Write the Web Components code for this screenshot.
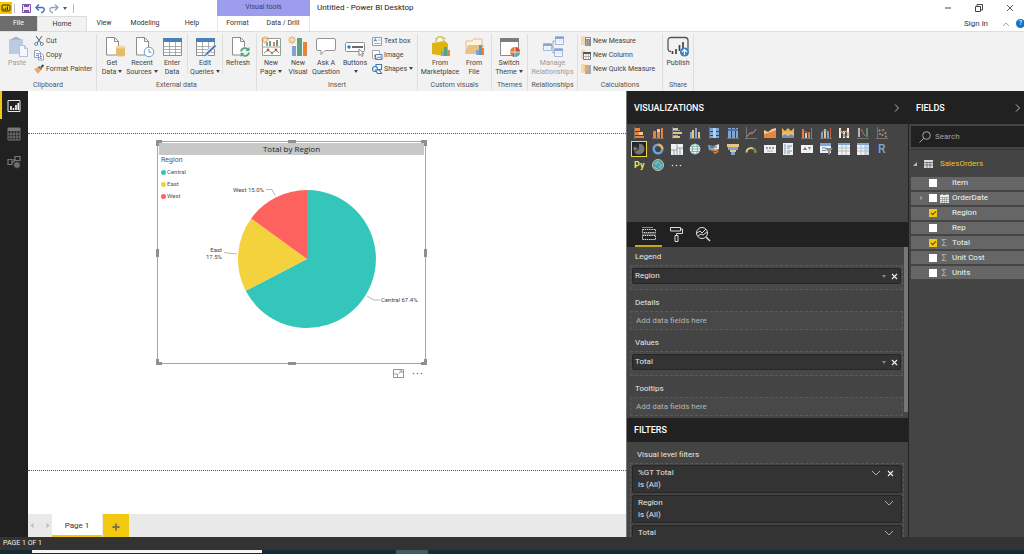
<!DOCTYPE html>
<html lang="en">
<head>
<meta charset="utf-8">
<title>Untitled - Power BI Desktop</title>
<style>
html, body { margin: 0; height: 100%; overflow: hidden; }
body { font: 7px/9px Roboto, "Noto Sans", sans-serif; color: #333; background: #fff; }
</style>
</head>
<body>
<report-app></report-app>
<script>
const RESET = `<style>
*{box-sizing:border-box}
button{font:inherit;color:inherit;background:none;border:0;margin:0;padding:0;text-align:inherit;cursor:default}
a{color:inherit;text-decoration:none}
svg{display:block;overflow:visible}
</style>`;

function define(name, html, ready) {
  const template = document.createElement('template');
  customElements.define(name, class extends HTMLElement {
    constructor() {
      super();
      this.attachShadow({ mode: 'open' });
    }
    connectedCallback() {
      if (this.shadowRoot.childNodes.length) return;
      template.innerHTML = RESET + (typeof html === 'function' ? html(this) : html);
      this.shadowRoot.append(template.content.cloneNode(true));
      if (ready) ready(this);
    }
  });
}

/* ---------- icons ---------- */
const doc = '<path d="M4.500 1.500h8l4 4v13.500h-12z" fill="#fff" stroke="#8c8c8c"/><path d="M12.500 1.500v4h4" fill="none" stroke="#8c8c8c"/>';
const grid = '<path d="M1.500 2.500h18v17h-18z" fill="#fff" stroke="#8c8c8c"/><path d="M1 2h19v4H1z" fill="#4a7fb8"/><path d="M1 10.500h19M1 13.500h19M1 16.500h19M7.500 6v13M13.500 6v13" stroke="#9b9b9b" stroke-width=".8"/>';
const sun = '<g stroke="#e3a64d" stroke-width="1.100"><path d="M4 0v8M0 4h8M1.200 1.200l5.600 5.600M6.800 1.200l-5.600 5.600"/></g><circle cx="4" cy="4" r="1.800" fill="#fbe6bd"/>';
const sheet = '<rect x="0" y="0" width="4" height="9" fill="#f2d8b2"/>';
const calc = '<rect x="4" y="1" width="6" height="9" fill="#8b8b8b"/><path d="M5 2.500h4" stroke="#fff"/><path d="M5.500 4.500v5M7.500 4.500v5" stroke="#ccc" stroke-dasharray="1 1"/>';
const O = '#e8833a', B = '#7ba6d6', Y = '#e9c583', W = '#f1f1f1';
const r = (x, y, w, h, f) => `<rect x="${x}" y="${y}" width="${w}" height="${h}" fill="${f}"/>`;
const axis = '<path d="M1.500 0v12" stroke="#8a8a8a" stroke-width=".7"/>';
const base = '<path d="M0 11.500h12" stroke="#8a8a8a" stroke-width=".7"/>';

const ICONS = {
  getdata: [20, 20, doc + '<path d="M14 11v8c0 2 9 2 9 0v-8z" fill="#e7bb6d"/><ellipse cx="18.500" cy="11" rx="4.500" ry="1.600" fill="#f5d79d"/>'],
  recent: [20, 20, doc + '<circle cx="17" cy="16" r="4.800" fill="#fff" stroke="#6f9cca"/><path d="M17 13v3.300h2.500" fill="none" stroke="#6f9cca"/>'],
  enter: [20, 20, grid],
  edit: [20, 20, grid + '<path d="M10 19.500L20 9.500" stroke="#f2f2f2" stroke-width="4"/><path d="M11 18.500L20.500 9.500" stroke="#4180c0" stroke-width="2"/><path d="M9 20.500l1-2.500 1.500 1.500z" fill="#4180c0"/>'],
  refresh: [20, 20, doc + '<circle cx="17" cy="16" r="5.500" fill="#f2f2f2"/><g fill="none" stroke="#5ba282" stroke-width="1.700"><path d="M13 15.500c.8-4 5.500-4.500 7.500-1.500M21 16.500c-.8 4-5.500 4.500-7.500 1.500"/></g><path d="M21.500 11v4h-4zM12.500 21v-4h4z" fill="#5ba282"/>'],
  newpage: [20, 20, '<path d="M1.500 2.500h18v17h-18z" fill="#fff" stroke="#9a9a9a"/><path d="M1 11h19" stroke="#9a9a9a"/>' + r(5, 6, 2, 4, B) + r(8, 5, 2, 5, '#5ba282') + r(12, 6, 2, 4, O) + r(15, 4, 2, 6, '#5ba282') + '<path d="M3 17l4-3 4 3 4-3 3 3" fill="none" stroke="#5ba282"/><circle cx="7" cy="14" r="1.400" fill="#d1532e"/><circle cx="15" cy="14" r="1.400" fill="#d1532e"/><circle cx="11" cy="17" r="1.200" fill="#5ba282"/>' + sun],
  newvisual: [20, 20, r(4, 10, 4, 10, B) + r(9, 2, 5, 18, '#5ba282') + r(15, 6, 4, 14, O) + sun],
  ask: [20, 20, '<path d="M2 2.500h16q1.500 0 1.500 1.500v9q0 1.500-1.500 1.500H9l-4 4v-4H2Q.500 14.500.500 13V4Q.500 2.500 2 2.500z" fill="#fff" stroke="#949494"/>'],
  buttons: [20, 20, '<rect x=".5" y="6.500" width="19" height="9" rx="1" fill="#fff" stroke="#8c8c8c"/><circle cx="4" cy="11" r="1.700" fill="#3b78b8"/><path d="M7 11h11" stroke="#444" stroke-width="1.600"/><path d="M14 13v6.500l1.600-1.400 1.200 2.400 1.300-.7-1.200-2.200h2z" fill="#fff" stroke="#777" stroke-width=".8"/>'],
  market: [20, 20, '<path d="M6 6c0-7 8-7 8 0" fill="none" stroke="#dcc15c" stroke-width="1.400"/><path d="M8 2l-3 1M13 1l3 2" stroke="#e6c13e"/><path d="M2 7l13-2 3 3v8l-4 4-12-2z" fill="#ddb413"/>' + r(11, 15, 3, 5, B) + r(14, 11, 3, 9, '#5ba282') + r(17, 14, 3, 6, O)],
  file: [20, 20, '<path d="M2 17V5h6l2-2h8v14z" fill="#fdf2de" stroke="#e7bb82"/><path d="M1 18l3-9h16l-3 9z" fill="#e9c183"/>' + r(12, 14, 3, 5, B) + r(15, 9, 3, 10, '#6b95b5') + r(18, 12, 2, 7, O)],
  theme: [20, 20, '<path d="M1.500 2.500h18v17h-18z" fill="#fff" stroke="#8c8c8c"/><path d="M1 2h19v4H1z" fill="#7c7c7c"/><circle cx="16" cy="16" r="5" fill="#e27c3c"/><path d="M16 16v-5a5 5 0 015 5z" fill="#ce4b32"/><path d="M16 16h5a5 5 0 01-3 4.500z" fill="#61b1a7"/><path d="M16 16l2 4.600a5 5 0 01-5-.6z" fill="#4a84bd"/><path d="M16 11v10M11 16h10" stroke="#fff" stroke-width=".7"/>'],
  manage: [22, 20, '<path d="M9 11h2V5h2M9 11h2v6h2" fill="none" stroke="#9aabc6"/><g fill="#f4f7fd" stroke="#a5b8dc"><path d="M13.500.500h8v8h-8zM1.500 7.500h8v7h-8zM12.500 12.500h8v8h-8z"/></g><path d="M13 2h9M1 9h9M12 14h9" stroke="#8aa4d3" stroke-width="2"/><path d="M15 5h5M3 12h5M14 17h5" stroke="#c1cce0" stroke-dasharray="1 1"/>'],
  publish: [22, 20, '<path d="M4 15.500q-3 0-3-3v-8q0-3 3-3h14q3 0 3 3v8q0 3-3 3" fill="none" stroke="#555" stroke-width="1.300"/><path d="M5.500 18v-3M9 18v-5M12.500 15V9M16 13V6" stroke="#444" stroke-width="1.700"/><circle cx="17.500" cy="16" r="4.600" fill="#3e82c4"/><path d="M17.500 19v-5M15 16l2.500-2.500L20 16" fill="none" stroke="#fff" stroke-width="1.200"/>'],
  paste: [20, 20, '<path d="M2 3h14v15H2z" fill="#bccbe4"/><path d="M5 4V2h2q0-1.500 2-1.500T11 2h2v2z" fill="#aab6cb"/><path d="M12.500 9.500h5l3 3v8h-8z" fill="#f3f7ff" stroke="#b1c1dd"/><path d="M17.500 9.500v3h3" fill="none" stroke="#b1c1dd"/>'],
  cut: [10, 10, '<path d="M2 0l5 7M8 0L3 7" stroke="#707070" stroke-width="1.100"/><circle cx="2.200" cy="8" r="1.500" fill="none" stroke="#5b87bb"/><circle cx="7.800" cy="8" r="1.500" fill="none" stroke="#5b87bb"/>'],
  copy: [10, 10, '<g fill="#fff" stroke="#8797ac" stroke-width=".9"><path d="M.5.500h4l2 2v5h-6zM4.500 3.500h3l2 2v4.500h-5z"/></g><path d="M2 3.500h2M2 5.500h2M6 6.500h2M6 8.500h2" stroke="#5b87bb" stroke-width=".8"/>'],
  painter: [10, 10, '<path d="M0 5l4-2 3 3-3 4z" fill="#e8ac68"/><path d="M4 3l3 3 1-1-3-3z" fill="#666"/><path d="M7 3.500L9.500 1" stroke="#444" stroke-width="1.800"/>'],
  textbox: [10, 10, '<path d="M.500 1.500h9v8h-9z" fill="#fff" stroke="#9a9a9a"/><path d="M2 5.500L3.300 2.500 4.600 5.500M2.500 4.500h1.700" fill="none" stroke="#3b78b8" stroke-width=".8"/><path d="M6 4h2.500M2 7.500h6.500" stroke="#aaa"/>'],
  image: [10, 10, '<path d="M.500.500h7v8h-7z" fill="#fff" stroke="#aaa"/>' + r(2, 5, 1, 2, O) + '<path d="M3.500 4.500h6.500v5H3.500z" fill="#e7f0fa" stroke="#4f86bf"/><path d="M4 9l2-2 1 1 1.500-1.500L10 9" fill="none" stroke="#4f86bf" stroke-width=".8"/>'],
  shapes: [10, 10, '<g fill="#f5f9ff" stroke="#3b78b8" stroke-width="1.100"><path d="M4 .500h5.500v5H4z"/><circle cx="3" cy="5" r="2.500"/><path d="M3.500 6h4L9.500 9.500h-4z"/></g>'],
  measure: [10, 10, sheet + calc],
  column: [10, 10, sheet + '<path d="M2.500 2.500h7v7h-7z" fill="#fff" stroke="#777"/>' + r(2, 2, 8, 2, '#555') + '<path d="M5 4v6M7.500 4v6M2 6.500h8" stroke="#999" stroke-width=".7"/>'],
  quick: [10, 10, sheet + '<rect x="4" y="1" width="6" height="9" fill="#aaa"/><path d="M6 1L3 6h2l-1 4 4-5H6l2-4z" fill="#e8b066"/>'],
  logo: [12, 12, r(0, 0, 12, 12, '#f2c811') + '<rect x="2" y="3" width="8" height="6" rx="1" fill="none" stroke="#3a3100" stroke-width="1"/><path d="M4 8V6.500M5.700 8V5.500M7.500 8V4.500" stroke="#3a3100"/>'],
  save: [9, 9, '<path d="M.500.500h8v8h-8z" fill="#f1e8fa" stroke="#7c55ad"/>' + r(2, 0, 5, 3, '#7c55ad') + r(2, 6, 5, 3, '#7c55ad')],
  undo: [10, 9, '<path d="M1.500 3.500H7c3 0 3 5-1 5" fill="none" stroke="#3a76b5" stroke-width="1.400"/><path d="M4 .500L1 3.500l3 3" fill="none" stroke="#3a76b5" stroke-width="1.400"/>'],
  redo: [10, 9, '<path d="M8.500 3.500H3c-3 0-3 5 1 5" fill="none" stroke="#8ea3ba" stroke-width="1.300"/><path d="M6 .500l3 3-3 3" fill="none" stroke="#8ea3ba" stroke-width="1.300"/>'],
  min: [8, 8, '<path d="M1 4h6" stroke="#444"/>'],
  restore: [8, 8, '<path d="M.500 2.500h5v5h-5zM2 2V.500h5.500V6H6" fill="none" stroke="#444"/>'],
  close: [8, 8, '<path d="M1 1l6 6M7 1L1 7" stroke="#444" stroke-width=".9"/>'],
  up: [8, 6, '<path d="M1 5l3-3 3 3" fill="none" stroke="#999" stroke-width=".9"/>'],
  report: [14, 14, '<path d="M1 1.500h12v11H1z" fill="none" stroke="#e8e8e8"/><path d="M4 11V7M6.500 11V9M9 11V6M11.300 11V4" stroke="#fff" stroke-width="1.600"/>'],
  data: [14, 14, '<path d="M1 1h12v12H1z" fill="none" stroke="#777"/>' + r(1, 1, 12, 3, '#777') + '<path d="M1 7h12M1 10h12M4 4v9M7 4v9M10 4v9" stroke="#777"/>'],
  model: [14, 14, '<g fill="none" stroke="#777" stroke-width="1.200"><path d="M1 4.500h4v5H1zM8 1.500h5v4H8zM5 7h2V4"/></g><circle cx="10" cy="10" r="2" fill="none" stroke="#777" stroke-width="1.400"/><path d="M10 6.500v7M6.500 10h7M7.500 7.500l5 5M12.500 7.500l-5 5" stroke="#777" stroke-width=".7"/>'],
  focus: [11, 9, '<path d="M.500.500h10v8h-10z" fill="none" stroke="#888" stroke-width=".9"/><path d="M.500 5h4v3.500M5.500 4.500L9 2M6.500 2H9v2" fill="none" stroke="#888" stroke-width=".8"/>'],
  dots: [11, 3, '<g fill="currentColor"><circle cx="1.500" cy="1.500" r=".8"/><circle cx="5.500" cy="1.500" r=".8"/><circle cx="9.500" cy="1.500" r=".8"/></g>'],
  chevright: [6, 8, '<path d="M1 .500l3.500 3.500L1 7.500" fill="none" stroke="#bbb"/>'],
  chevdown: [10, 6, '<path d="M1 1l4 4 4-4" fill="none" stroke="#bbb" stroke-width=".9"/>'],
  cross: [7, 7, '<path d="M1 1l5 5M6 1L1 6" stroke="#eee" stroke-width="1.100"/>'],
  left: [5, 5, '<path d="M3.500 0v5L.500 2.500z" fill="#bbb"/>'],
  right: [5, 5, '<path d="M1.500 0v5l3-2.500z" fill="#bbb"/>'],
  plus: [8, 8, '<path d="M4 .500v7M.500 4h7" stroke="#77705a" stroke-width="1.800"/>'],
  wells: [16, 16, '<g fill="none" stroke="#ddd"><path d="M1.500 3.500h13v3h-13zM1.500 9.500h13v4h-13z" stroke-dasharray="1.500 .7"/></g><path d="M1 1.500h11M1 8h14" stroke="#aaa" stroke-width=".8"/>'],
  roller: [14, 16, '<path d="M1.500 1.500h10v3.500h-10zM11.500 3H13.500V7.500H7.500v2M6 9.500h3v6h-3z" fill="none" stroke="#ddd"/>'],
  analytics: [16, 16, '<circle cx="7" cy="7" r="5.500" fill="none" stroke="#ddd"/><path d="M11 11l4 4" stroke="#ddd" stroke-width="1.500"/><path d="M2 7l3-2 2 2 4-4M3 10l3-2 2 1 4-3" fill="none" stroke="#ddd"/>'],
  search: [12, 12, '<circle cx="7.500" cy="4.500" r="3.800" fill="none" stroke="#aaa"/><path d="M4.500 7.500L.500 11.500" stroke="#aaa"/>'],
  table: [9, 8, r(0, 0, 9, 8, '#ddd') + '<path d="M0 2.500h9M0 5h9M3 2v6M6 2v6" stroke="#555" stroke-width=".7"/>'],
  calendar: [9, 9, r(0, 1, 9, 8, '#eee') + '<path d="M0 3.500h9M0 5.500h9M0 7.500h9M2.500 3v6M4.500 3v6M6.500 3v6" stroke="#777" stroke-width=".5"/><path d="M2 0v2M7 0v2" stroke="#eee"/>'],
  // visual gallery
  v0: [12, 12, axis + r(2, 1, 5, 3, O) + r(2, 5, 4, 3, O) + r(6, 5, 4, 3, '#f4c9a7') + r(2, 9, 9, 2, O)],
  v1: [12, 12, base + r(1, 4, 3, 7, O) + r(5, 2, 3, 3, '#f4c9a7') + r(5, 5, 3, 6, O) + r(9, 1, 2, 10, O)],
  v2: [12, 12, axis + r(2, 1, 5, 2, Y) + r(2, 3, 7, 1, B) + r(2, 5, 9, 2, Y) + r(2, 8, 5, 1, B) + r(2, 9, 7, 2, Y)],
  v3: [12, 12, base + r(1, 5, 2, 6, B) + r(3, 3, 2, 8, Y) + r(6, 1, 2, 10, B) + r(9, 5, 2, 6, Y)],
  v4: [12, 12, axis + r(2, 1, 9, 3, B) + r(2, 5, 9, 3, B) + r(2, 9, 9, 2, B) + r(5, 1, 3, 10, '#b9cfe8')],
  v5: [12, 12, base + r(1, 1, 3, 10, B) + r(5, 1, 3, 10, B) + r(9, 1, 2, 10, B) + r(1, 2, 10, 2, '#56718f')],
  v6: [12, 12, axis + base + '<path d="M2 9l3-3 2 1 4-5" fill="none" stroke="#7ba6d6" stroke-width=".8"/><path d="M2 10l4-5 2 1 3-3" fill="none" stroke="#c47a50" stroke-width=".8"/>'],
  v7: [12, 12, '<path d="M0 3l4 2 4-3 4-1v9H0z" fill="#f1cda3"/><path d="M0 7l4-1 8-3v8H0z" fill="#e8833a"/>' + r(0, 10, 12, 1, B)],
  v8: [12, 12, '<path d="M0 1l3 3 3-3 3 3 3-3v10H0z" fill="#eab34c"/><path d="M0 8l3-3 3 3 3-3 3 3v3H0z" fill="#e9c583"/><path d="M0 9l3-2 3 2 3-2 3 2v2H0z" fill="#6e8fb3"/>'],
  v9: [12, 12, base + r(1, 2, 2, 9, O) + r(4, 6, 2, 5, '#f4c9a7') + r(7, 5, 2, 6, '#b9876b') + r(10, 1, 1, 10, '#c8643a') + '<path d="M1 3l4 2 4 1" fill="none" stroke="#c8643a" stroke-width=".9"/>'],
  v10: [12, 12, base + r(1, 5, 2, 6, B) + r(4, 2, 2, 9, Y) + r(7, 4, 2, 7, B) + r(10, 1, 1, 10, '#c8643a') + '<path d="M1 6l4-3 4 2" fill="none" stroke="#7c95ae" stroke-width=".9"/>'],
  v11: [12, 12, r(1, 1, 2, 10, W) + r(5, 4, 2, 7, W) + r(9, 1, 2, 10, W) + '<path d="M2 3l3 3 2-2 4 3-3 3" fill="none" stroke="#e8a05a" stroke-width="1.300"/>' + r(5, 7, 2, 3, B)],
  v12: [12, 12, base + '<path d="M2 1v9" stroke="#ddd" stroke-width="1.500"/><path d="M4 2l4 7" stroke="#d56b57"/><path d="M10 1v9" stroke="#65a58a" stroke-width="1.500"/>'],
  v13: [12, 12, axis + base + '<g fill="#7ba6d6"><circle cx="3.500" cy="3.500" r="1"/><circle cx="6.500" cy="8" r="1"/><circle cx="9.500" cy="6" r="1"/></g><g fill="#e8833a"><circle cx="7" cy="3" r="1"/><circle cx="4" cy="7" r="1"/><circle cx="10" cy="9.500" r="1"/></g>'],
  v14: [12, 12, '<circle cx="6" cy="6" r="5.500" fill="#777"/><path d="M6 6V.500A5.500 5.500 0 001 3.500z" fill="#2b2b2b"/><path d="M6 6L1 8.500" stroke="#2b2b2b"/>'],
  v15: [12, 12, '<circle cx="6" cy="6" r="4.300" fill="none" stroke="#6ba4dd" stroke-width="2.400"/><path d="M6 1.700A4.300 4.300 0 0110.300 6" fill="none" stroke="#e8b066" stroke-width="2.400"/>'],
  v16: [12, 12, r(0, 1, 12, 11, W) + '<path d="M6 1v11M0 7h6M6 5h6M9 5v7M3 7v5" stroke="#7f8d9c" stroke-width=".8"/>'],
  v17: [12, 12, '<circle cx="6" cy="6" r="5.300" fill="#edf4f4"/><path d="M.700 6h10.600M1.500 3.500h9M1.500 8.500h9" stroke="#5b9c94" stroke-width=".7"/><ellipse cx="6" cy="6" rx="2.500" ry="5.200" fill="none" stroke="#5b9c94" stroke-width=".7"/>'],
  v18: [12, 12, '<path d="M0 2l6 1v5l-5-1z" fill="#7ba6d6"/><path d="M6 3l5-2v5l-5 2z" fill="#e9e9e9"/><path d="M3 7l6-1 2 3-4 2z" fill="#e8833a"/><path d="M2 4h7M3 8l7 1" stroke="#465b70"/>'],
  v19: [12, 12, r(0, 1, 12, 3, Y) + r(1, 4, 10, 3, B) + r(3, 7, 6, 2, Y) + r(4, 9, 4, 3, B)],
  v20: [12, 12, '<path d="M1.500 9.500a4.500 4.500 0 019 0" fill="none" stroke="#e9c583" stroke-width="2"/><path d="M8 5.500a4.500 4.500 0 012.500 4" fill="none" stroke="#6f8a5a" stroke-width="2"/>'],
  v21: [12, 12, r(0, 2, 12, 8, W) + '<path d="M2 5h2M5 5h2M8 5h2" stroke="#5b87bb" stroke-width="1.500"/><path d="M3 8h6" stroke="#aaa"/>'],
  v22: [12, 12, r(1, 0, 10, 12, W) + r(2, 1, 2, 10, '#b8c4d2') + '<path d="M5 3h5M5 5h3M5 8h5M5 10h3" stroke="#5b87bb" stroke-width=".9"/>'],
  v23: [12, 12, r(0, 2, 12, 8, W) + '<path d="M2 7l2-3 2 3z" fill="#d2513f"/><path d="M7 4h3l-1.500 3z" fill="#4f9d73"/>'],
  v24: [12, 12, r(0, 0, 11, 10, W) + r(0, 0, 11, 3, B) + '<path d="M2 5h4M2 7.500h4" stroke="#6b8fb5"/><path d="M5 5h8L10 8.500V12L8 11V8.500z" fill="#8d8d8d"/>'],
  v25: [12, 12, r(0, 0, 12, 12, W) + r(0, 0, 12, 2, B) + '<path d="M0 5h12M0 8h12M4 2v10M8 2v10" stroke="#a9b5c1" stroke-width=".8"/>'],
  v26: [12, 12, r(0, 0, 12, 12, W) + r(0, 0, 12, 2, B) + r(8, 2, 4, 10, '#cddced') + '<path d="M0 5h12M0 8h12M4 2v10M8 2v10" stroke="#a9b5c1" stroke-width=".8"/>'],
  v29: [12, 12, '<circle cx="6" cy="6" r="5.500" fill="#4f9b8f" stroke="#c2c2c2"/><path d="M2 4l3-2 2 2-3 3zM6 7l3-2 1 3-3 2z" fill="#5eb4e8"/><path d="M5 2l5 4M2 8l4 2" stroke="#a8d46f"/>'],
};
define('ui-icon', el => {
  const [w, h, body] = ICONS[el.getAttribute('name')];
  return `<style>:host{display:block;flex:none;width:${w}px;height:${h}px}</style><svg width="${w}" height="${h}" viewBox="0 0 ${w} ${h}" aria-hidden="true">${body}</svg>`;
});

/* ---------- title bar ---------- */
define('title-bar', `<style>
:host{display:flex;height:16px;align-items:stretch;font-size:8px;background:#fff}
.quick{display:flex;align-items:center;width:217px;flex:none}
.quick button{margin-left:4px}
.sep{width:1px;height:9px;background:#bbb;margin:0 3px 0 2px}
.caret{border:2px solid transparent;border-top:3px solid #555;border-bottom:0}
.tools{width:93px;flex:none;background:#9d9dee;font-size:7px;line-height:15px;text-align:center;color:#3c3c70}
h1{font:inherit;line-height:16px;margin:0 0 0 7px;flex:1;color:#222}
.win{display:flex;align-items:center;gap:23px;padding-right:10px}
</style>
<div class="quick"><ui-icon name="logo"></ui-icon><span class="sep"></span>
<button aria-label="Save"><ui-icon name="save"></ui-icon></button>
<button aria-label="Undo"><ui-icon name="undo"></ui-icon></button>
<button aria-label="Redo"><ui-icon name="redo"></ui-icon></button>
<button aria-label="Customize"><div class="caret"></div></button><button tabindex="-1" aria-hidden="true"><div class="sep"></div></button></div>
<div class="tools">Visual tools</div>
<h1>Untitled - Power BI Desktop</h1>
<div class="win"><button aria-label="Minimize"><ui-icon name="min"></ui-icon></button><button aria-label="Restore"><ui-icon name="restore"></ui-icon></button><button aria-label="Close"><ui-icon name="close"></ui-icon></button></div>`);

define('ribbon-tabs', `<style>
:host{display:flex;height:15px;background:#fff}
button{text-align:center;line-height:15px;flex:none}
.file{width:37px;background:#6d6d6d;color:#fff}
.home{width:50px;background:#f2f2f2;border:1px solid #dcdcdc;border-bottom:0;line-height:14px}
.view{width:34px}.mod{width:48px}.help{width:46px}
.ctx{display:flex;margin-left:2px;width:93px;border:solid #e6e6e6;border-width:0 1px}
.fmt{width:39px}.drill{flex:1}
.end{margin-left:auto;display:flex;align-items:center;gap:14px;font-size:8px}
.end>div{display:flex;align-items:center;gap:6px;margin-right:-1px}
.q{width:9px;height:9px;border-radius:5px;background:#1173cf;color:#fff;line-height:9px;font-size:7px}
</style>
<button class="file">File</button><button class="home">Home</button><button class="view">View</button><button class="mod">Modeling</button><button class="help">Help</button>
<div class="ctx"><button class="fmt">Format</button><button class="drill">Data / Drill</button></div>
<div class="end"><button>Sign in</button><div><button aria-label="Collapse ribbon"><ui-icon name="up"></ui-icon></button><button class="q">?</button></div></div>`);

/* ---------- ribbon ---------- */
define('ribbon-group', el => `<style>
:host{display:flex;flex-direction:column;flex:none;border-right:1px solid #dedede}
.items{display:flex;flex:1}
.label{text-align:center;line-height:12px;color:#555}
</style><div class="items"><slot></slot></div><div class="label">${el.getAttribute('label')}</div>`);

define('ribbon-button', el => `<style>
:host{display:block;flex:none}
button{display:flex;flex-direction:column;align-items:center;width:100%;gap:3px;padding-top:2px;white-space:nowrap}
.t{text-align:center}
:host([small]) button{flex-direction:row;align-items:center;gap:2px;height:14px;padding:0}
:host([muted]){color:#9b9b9b}
.caret{display:inline-block;border:2px solid transparent;border-top:3px solid #444;border-bottom:0;margin-left:2px;vertical-align:1px}
</style><button><ui-icon name="${el.getAttribute('icon')}"></ui-icon><span class="t"><slot></slot>${el.hasAttribute('caret') ? '<span class="caret"></span>' : ''}</span></button>`);

define('ribbon-bar', `<style>
:host{display:flex;height:60px;background:#f2f2f2;border-top:1px solid #dedede;padding-top:2px;color:#444}
.stack{display:flex;flex-direction:column}
.w26{width:26px}.w28{width:28px}.w30{width:30px}.w34{width:34px}.w36{width:36px}.w40{width:40px}.w49{width:49px}
.rule{border:solid #dedede;border-width:0 1px;height:40px}
.pad{padding-left:3px}
.clip{width:97px}.ext{width:160px}.ins{width:161px}.cus{width:74px}.cus ribbon-button:first-child{margin-left:2px}.th{width:36px}.calc{width:85px}
</style>
<ribbon-group class="clip" label="Clipboard"><ribbon-button class="w34" icon="paste" muted>Paste</ribbon-button>
<div class="stack"><ribbon-button small icon="cut">Cut</ribbon-button><ribbon-button small icon="copy">Copy</ribbon-button><ribbon-button small icon="painter">Format Painter</ribbon-button></div></ribbon-group>
<ribbon-group class="ext" label="External data"><ribbon-button class="w30" icon="getdata" caret>Get<br>Data</ribbon-button><ribbon-button class="w30" icon="recent" caret>Recent<br>Sources</ribbon-button><ribbon-button class="w30" icon="enter">Enter<br>Data</ribbon-button><ribbon-button class="w36 rule" icon="edit" caret>Edit<br>Queries</ribbon-button><ribbon-button class="w30" icon="refresh">Refresh</ribbon-button></ribbon-group>
<ribbon-group class="ins" label="Insert"><ribbon-button class="w28" icon="newpage" caret>New<br>Page</ribbon-button><ribbon-button class="w26" icon="newvisual">New<br>Visual</ribbon-button><ribbon-button class="w30" icon="ask">Ask A<br>Question</ribbon-button><ribbon-button class="w28" icon="buttons" caret>Buttons<br></ribbon-button>
<div class="stack pad"><ribbon-button small icon="textbox">Text box</ribbon-button><ribbon-button small icon="image">Image</ribbon-button><ribbon-button small icon="shapes" caret>Shapes</ribbon-button></div></ribbon-group>
<ribbon-group class="cus" label="Custom visuals"><ribbon-button class="w40" icon="market">From<br>Marketplace</ribbon-button><ribbon-button class="w28" icon="file">From<br>File</ribbon-button></ribbon-group>
<ribbon-group class="th" label="Themes"><ribbon-button class="w34" icon="theme" caret>Switch<br>Theme</ribbon-button></ribbon-group>
<ribbon-group label="Relationships"><ribbon-button class="w49" icon="manage" muted>Manage<br>Relationships</ribbon-button></ribbon-group>
<ribbon-group class="calc" label="Calculations"><div class="stack pad"><ribbon-button small icon="measure">New Measure</ribbon-button><ribbon-button small icon="column">New Column</ribbon-button><ribbon-button small icon="quick">New Quick Measure</ribbon-button></div></ribbon-group>
<ribbon-group label="Share"><ribbon-button class="w30" icon="publish">Publish</ribbon-button></ribbon-group>`);

/* ---------- left rail ---------- */
define('nav-rail', `<style>
:host{display:block;width:28px;flex:none;background:#212121}
button{display:flex;width:100%;height:28px;align-items:center;justify-content:center;border:solid transparent;border-width:0 2px;padding-top:2px}
.on{border-left-color:#f2c811}
</style><button class="on" aria-label="Report"><ui-icon name="report"></ui-icon></button><button aria-label="Data"><ui-icon name="data"></ui-icon></button><button aria-label="Model"><ui-icon name="model"></ui-icon></button>`);

/* ---------- chart ---------- */
define('pie-visual', `<style>
:host{display:block;position:relative;width:269px;height:223px;border:1px solid #a6a6a6;padding:1px;background:#fff;color:#555}
h2{margin:0;background:#c8c8c8;font:8px/12px "Open Sans",sans-serif;text-align:center;color:#222}
.body{display:flex}
.legend{width:44px;flex:none;font:6px/12px Roboto,sans-serif;padding:0 0 0 2px}
.legend b{display:block;font-weight:400;font-size:7px;line-height:11px}
ul{list-style:none;margin:0;padding:0}
li{display:flex;align-items:center;gap:1px}
li i{width:5px;height:5px;border-radius:3px;background:var(--c)}
svg text{font:6px Roboto,sans-serif;fill:#444}
.h{position:absolute;border:0 solid #8f8f8f}
.tl,.tr,.bl,.br{width:6px;height:6px}
.tl{top:-2px;left:-2px;border-width:3px 0 0 3px}.tr{top:-2px;right:-2px;border-width:3px 3px 0 0}
.bl{bottom:-2px;left:-2px;border-width:0 0 3px 3px}.br{bottom:-2px;right:-2px;border-width:0 3px 3px 0}
.t,.b{width:8px;height:3px;left:50%;margin-left:-4px;background:#8f8f8f}.t{top:-2px}.b{bottom:-2px}
.l,.r{width:3px;height:8px;top:50%;margin-top:-4px;background:#8f8f8f}.l{left:-2px}.r{right:-2px}
.tools{position:absolute;top:100%;right:2px;display:flex;gap:8px;align-items:center;padding-top:6px;color:#777}
</style>
<h2>Total by Region</h2>
<div class="body"><div class="legend"><b>Region</b><ul><li style="--c:#35c6bb"><i></i>Central</li><li style="--c:#f4d23e"><i></i>East</li><li style="--c:#fd625e"><i></i>West</li></ul></div>
<svg width="222" height="207" viewBox="0 0 222 207" role="img" aria-label="Total by Region pie chart">
<path d="M104 104V35A69 69 0 1142.700 135.800z" fill="#35c6bb"/><path d="M104 104L42.700 135.800A69 69 0 0148.200 63.400z" fill="#f4d23e"/><path d="M104 104L48.200 63.400A69 69 0 01104 35z" fill="#fd625e"/>
<g fill="none" stroke="#999" stroke-width=".7"><path d="M63 34.500h6l3 6M21 97.500l13 1.500M164 141l7 4h6"/></g>
<text x="61" y="37" text-anchor="end">West 15.0%</text><text x="19" y="97" text-anchor="end">East</text><text x="19" y="104" text-anchor="end">17.5%</text><text x="178" y="147">Central 67.4%</text></svg></div>
<i class="h tl"></i><i class="h tr"></i><i class="h bl"></i><i class="h br"></i><i class="h t"></i><i class="h b"></i><i class="h l"></i><i class="h r"></i>
<div class="tools"><button aria-label="Focus mode"><ui-icon name="focus"></ui-icon></button><button aria-label="More options"><ui-icon name="dots"></ui-icon></button></div>`);

define('page-tabs', `<style>
:host{display:flex;height:23px;background:#e9e9e9;font-size:8px}
.nav{display:flex;width:24px;align-items:center;justify-content:space-between;padding:0 2px}
.page{width:50px;background:#fff;border-bottom:2px solid #f2c811;text-align:center;line-height:23px}
.add{width:26px;margin-left:1px;background:#f2c811;display:flex;align-items:center;justify-content:center;padding-top:3px}
</style><div class="nav"><button aria-label="Previous"><ui-icon name="left"></ui-icon></button><button aria-label="Next"><ui-icon name="right"></ui-icon></button></div><button class="page">Page 1</button><button class="add" aria-label="New page"><ui-icon name="plus"></ui-icon></button>`);

define('report-canvas', `<style>
:host{display:flex;flex-direction:column;flex:1;min-width:0;background:#fff}
.page{flex:1;margin:42px 0 43px;border:1px dotted #555;border-width:1px 0;padding:7px 0 0 129px}
</style><div class="page"><pie-visual></pie-visual></div><page-tabs></page-tabs>`);

/* ---------- side panes ---------- */
define('pane-header', `<style>
:host{display:flex;align-items:center;justify-content:space-between;flex:none;height:33px;padding:0 8px 0 7px;background:#212121;color:#fff}
h2{margin:0;font:500 9px/12px Roboto,sans-serif}
</style><h2><slot></slot></h2><slot name="end"></slot>`);

define('field-well', el => {
  const value = el.getAttribute('value');
  return `<style>
:host{display:block;color:#e6e6e6}
h3{font:inherit;margin:0;padding-left:5px;line-height:17px}
.well{border:1px dashed #5a5a5a;padding:2px 1px;background:#484848;min-height:19px}
.has{padding-bottom:5px}
.chip{display:flex;align-items:center;gap:5px;height:16px;background:#333;border:1px solid #262626;border-radius:2px;padding:0 2px}
.chip span{flex:1}
.caret{border:2px solid transparent;border-top:3px solid #888;border-bottom:0}
.hint{padding-left:4px;line-height:13px;color:#b5b5b5}
</style><h3>${el.getAttribute('label')}</h3>` + (value
    ? `<div class="well has"><div class="chip"><span>${value}</span><button aria-label="Options"><div class="caret"></div></button><button aria-label="Remove"><ui-icon name="cross"></ui-icon></button></div></div>`
    : `<div class="well"><div class="hint">Add data fields here</div></div>`);
});

define('filter-card', el => `<style>
:host{display:flex;align-items:flex-start;gap:6px;height:28px;flex:none;background:#333;border:1px solid #262626;border-radius:2px;padding:1px 7px 0 5px;line-height:12px;color:#e6e6e6}
div{flex:1}ui-icon{margin-top:3px}
</style><div><slot></slot></div><button aria-label="Expand"><ui-icon name="chevdown"></ui-icon></button>${el.hasAttribute('removable') ? '<button aria-label="Clear"><ui-icon name="cross"></ui-icon></button>' : ''}`);

define('viz-pane', `<style>
:host{display:flex;flex-direction:column;width:282px;flex:none;min-height:0;background:#444;border-left:1px solid #777;font-size:8px;line-height:12px;overflow:hidden}
.gallery{display:grid;grid-template-columns:repeat(14,1fr);grid-auto-rows:16px;align-content:start;padding:1px 17px 0 3px;height:98px;flex:none}
.gallery button{display:flex;align-items:center;justify-content:center}
.gallery .on{border:1px solid #f2d840;background:#252525;width:16px;justify-self:center}
.r{font:500 12px/12px Roboto,sans-serif;color:#7ba6d6}.py{font:700 9px/12px Roboto,sans-serif;color:#f5e14a}.more{color:#ddd}
.tabs{display:flex;height:25px;flex:none;background:#212121;padding-left:8px}
.tabs button{width:27px;display:flex;align-items:center;justify-content:center;border-bottom:2px solid transparent}
.tabs .on{border-color:#c9a518}
.wells{display:flex;flex:none;height:171px}
.list{flex:1;padding:1px 1px 0 3px;display:flex;flex-direction:column;gap:4px}
.bar{width:4px;height:165px;background:#777}
.fh{height:24px}
h3{font:inherit;margin:0;padding:7px 0 2px 10px;color:#e6e6e6}
.cards{margin:0 4px 0 3px;border:1px dashed #5a5a5a;border-bottom:0;padding:1px;display:flex;flex-direction:column;gap:2px;flex:1;min-height:0;overflow:hidden}
</style>
<pane-header>VISUALIZATIONS<ui-icon slot="end" name="chevright"></ui-icon></pane-header>
<div class="gallery"></div>
<div class="tabs"><button class="on" aria-label="Fields"><ui-icon name="wells"></ui-icon></button><button aria-label="Format"><ui-icon name="roller"></ui-icon></button><button aria-label="Analytics"><ui-icon name="analytics"></ui-icon></button></div>
<div class="wells"><div class="list"><field-well label="Legend" value="Region"></field-well><field-well label="Details"></field-well><field-well label="Values" value="Total"></field-well><field-well label="Tooltips"></field-well></div><div class="bar"></div></div>
<pane-header class="fh">FILTERS</pane-header>
<h3>Visual level filters</h3>
<div class="cards"><filter-card removable>%GT Total<br>is (All)</filter-card><filter-card>Region<br>is (All)</filter-card><filter-card>Total</filter-card></div>`, el => {
  let out = '';
  for (let i = 0; i < 31; i++) {
    const body = i === 27 ? '<span class="r">R</span>' : i === 28 ? '<span class="py">Py</span>' : `<ui-icon name="${i === 30 ? 'dots' : 'v' + i}"></ui-icon>`;
    out += `<button class="${i === 14 ? 'on' : i === 30 ? 'more' : ''}">${body}</button>`;
  }
  el.shadowRoot.querySelector('.gallery').innerHTML = out;
});

define('field-row', el => `<style>
:host{display:block;background:#666;color:#f4f4f4}
label{display:grid;grid-template-columns:18px 9px 12px 1fr;align-items:center;height:100%}
.x{width:0;height:0;margin-left:9px;border:2px solid transparent;border-left:3px solid #999;border-right:0}
input{appearance:none;margin:0;width:8px;height:8px;background:#fff;position:relative}
input:checked{background:#f2c811}
input:checked::after{content:"";position:absolute;left:2px;top:2px;width:4px;height:2px;border:solid #5a4a00;border-width:0 0 1px 1px;transform:rotate(-45deg)}
.k{display:flex;justify-content:center;color:#b5b5b5;font-size:9px}
.n{padding-left:2px}
</style><label><span>${el.hasAttribute('tree') ? '<div class="x"></div>' : ''}</span><input type="checkbox" ${el.hasAttribute('checked') ? 'checked' : ''}><span class="k">${el.hasAttribute('tree') ? '<ui-icon name="calendar"></ui-icon>' : el.hasAttribute('sum') ? 'Σ' : ''}</span><span class="n"><slot></slot></span></label>`);

define('fields-pane', `<style>
:host{display:block;width:116px;flex:none;background:#444;font-size:8px;line-height:12px;border-left:1px solid #222;overflow:hidden}
.chev{margin-right:-5px}
.search{display:flex;align-items:center;gap:4px;margin:2px 0 0 2px;height:21px;background:#212121;padding-left:8px}
input{appearance:none;border:0;background:none;font:inherit;color:#ccc;width:80px;padding:0;outline:0}
input::placeholder{color:#a5a5a5;opacity:1}
.tbl{display:flex;align-items:center;height:28px;margin-top:2px;border-top:1px solid #383838;padding-left:4px;color:#e9c32a}
.tri{width:0;height:0;border-left:4px solid transparent;border-bottom:4px solid #bbb;margin-right:7px}
.tbl ui-icon{margin-right:7px}
.rows{display:grid;grid-auto-rows:1fr;gap:2px;height:102px;margin-left:2px}
</style>
<pane-header>FIELDS<ui-icon class="chev" slot="end" name="chevright"></ui-icon></pane-header>
<label class="search"><ui-icon name="search"></ui-icon><input type="search" placeholder="Search" aria-label="Search"></label>
<div class="tbl"><span class="tri"></span><ui-icon name="table"></ui-icon>SalesOrders</div>
<div class="rows"><field-row>Item</field-row><field-row tree>OrderDate</field-row><field-row checked>Region</field-row><field-row>Rep</field-row><field-row checked sum>Total</field-row><field-row sum>Unit Cost</field-row><field-row sum>Units</field-row></div>`);

/* ---------- bottom ---------- */
define('status-bar', `<style>:host{display:block;height:13px;background:#333;color:#eee;padding-left:3px;line-height:13px}</style>PAGE 1 OF 1`);
define('task-bar', `<style>:host{display:flex;height:4px;background:#142c37;padding-left:32px}
.a{width:230px;height:3px;background:#f4f4f4;margin-right:134px}.b{width:32px;background:#455a64}</style><div class="a"></div><div class="b"></div>`);

define('report-app', `<style>
:host{display:flex;flex-direction:column;height:100vh}
main{display:flex;flex:1;min-height:0}
title-bar,ribbon-tabs,ribbon-bar,status-bar,task-bar{flex:none}
</style><title-bar></title-bar><ribbon-tabs></ribbon-tabs><ribbon-bar></ribbon-bar>
<main><nav-rail></nav-rail><report-canvas></report-canvas><viz-pane></viz-pane><fields-pane></fields-pane></main>
<status-bar></status-bar><task-bar></task-bar>`);
</script>
</body>
</html>
